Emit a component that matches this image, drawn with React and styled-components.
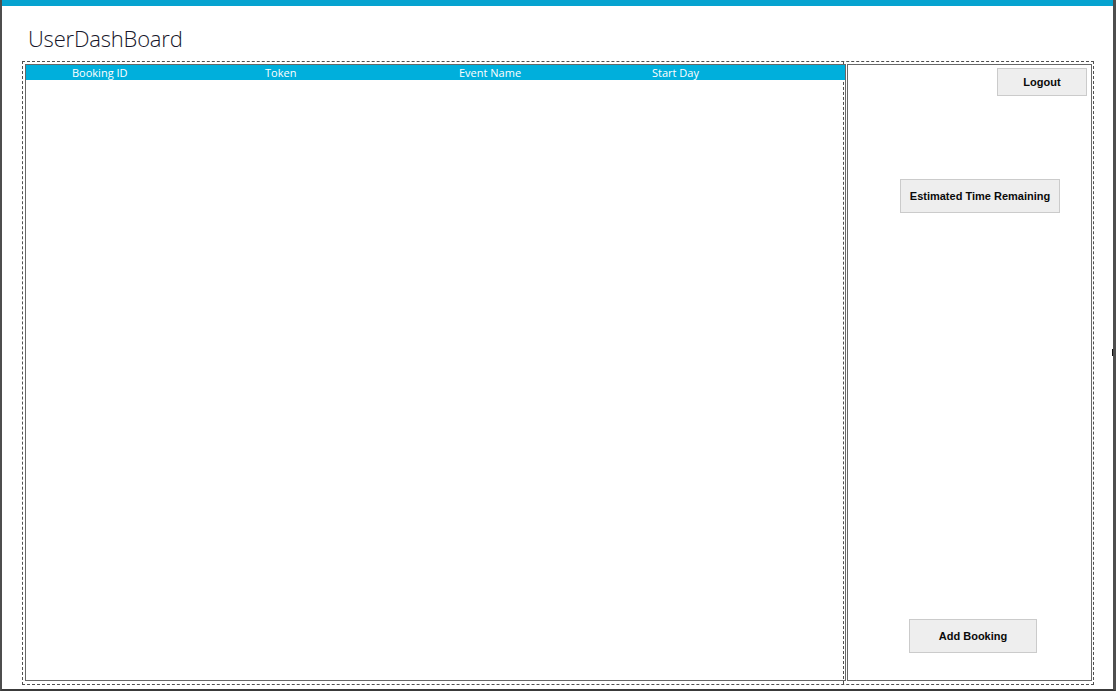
import React from "react";
import styled, { createGlobalStyle } from "styled-components";

const Global = createGlobalStyle`
  html, body { margin: 0; padding: 0; background: #ffffff; }
  * { box-sizing: border-box; }
`;

const Window = styled.div`
  position: relative;
  width: 1116px;
  height: 691px;
  background: #ffffff;
  border-left: 2px solid #4e4e4e;
  border-right: 3px solid #4e4e4e;
  border-bottom: 2px solid #3a3a3a;
  display: flex;
  flex-direction: column;
  overflow: hidden;
`;

const TopBar = styled.div`
  height: 6px;
  background: #06a3d0;
  flex: none;
`;

const Title = styled.h1`
  margin: 17px 0 0 26px;
  height: 38px;
  font-family: "Open Sans", "Noto Sans", sans-serif;
  font-weight: 300;
  font-size: 22px;
  line-height: 30px;
  color: #16162a;
  letter-spacing: -0.2px;
`;

const Table = styled.div`
  margin-left: 20px;
  width: 1072px;
  height: 624px;
  border: 1px dashed #505050;
  display: flex;
`;

const LeftCell = styled.div`
  flex: none;
  width: 821px;
  padding: 2px 2px 3px 2px;
  border-right: 1px dashed #505050;
  display: flex;
`;

const RightCell = styled.div`
  flex: 1;
  padding: 2px 1px 3px 3px;
  display: flex;
`;

const Panel = styled.div`
  flex: 1;
  border: 1px solid #686868;
  display: flex;
  flex-direction: column;
`;

const GridHeader = styled.div`
  height: 15px;
  background: #00afdc;
  display: grid;
  grid-template-columns: 193px 194px 193px 193px;
  padding-left: 46px;
  align-items: center;
`;

const HeaderCell = styled.div`
  font-family: "Open Sans", "Noto Sans", sans-serif;
  font-size: 11px;
  line-height: 15px;
  color: #ffffff;
  white-space: nowrap;
`;

const Button = styled.button`
  flex: none;
  width: ${(p) => p.$w}px;
  height: ${(p) => p.$h}px;
  background: #eeeeee;
  border: 1px solid #cbcbcb;
  border-radius: 0;
  font-family: "Liberation Sans", Arial, sans-serif;
  font-weight: 700;
  font-size: 11px;
  color: #0a0a0a;
  padding: 0;
  cursor: pointer;
`;

const LogoutButton = styled(Button)`
  align-self: flex-end;
  margin: 3px 4px 0 0;
`;

const TimeButton = styled(Button)`
  align-self: flex-start;
  margin: 83px 0 0 52px;
`;

const AddButton = styled(Button)`
  align-self: flex-start;
  margin: auto 0 27px 61px;
`;

const ResizeHandle = styled.div`
  position: absolute;
  right: -3px;
  top: 349px;
  width: 4px;
  height: 7px;
  background: #ffffff;
  border: 1px solid #111111;
`;

const columns = ["Booking ID", "Token", "Event Name", "Start Day"];

export default function App() {
  return (
    <>
      <Global />
      <Window>
        <TopBar />
        <Title>UserDashBoard</Title>
        <Table>
          <LeftCell>
            <Panel>
              <GridHeader>
                {columns.map((c) => (
                  <HeaderCell key={c}>{c}</HeaderCell>
                ))}
              </GridHeader>
            </Panel>
          </LeftCell>
          <RightCell>
            <Panel>
              <LogoutButton $w={90} $h={28}>Logout</LogoutButton>
              <TimeButton $w={160} $h={34}>Estimated Time Remaining</TimeButton>
              <AddButton $w={128} $h={34}>Add Booking</AddButton>
            </Panel>
          </RightCell>
        </Table>
        <ResizeHandle />
      </Window>
    </>
  );
}
